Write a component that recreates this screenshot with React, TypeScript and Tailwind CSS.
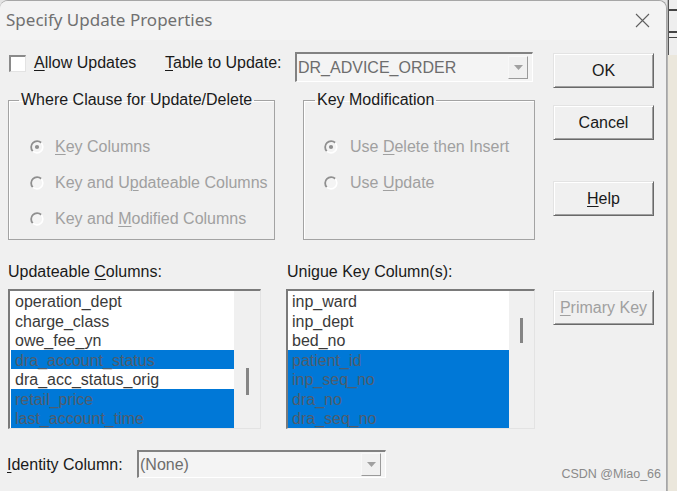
import React from 'react';

const Mn: React.FC<{ children: React.ReactNode }> = ({ children }) => (
  <span className="underline decoration-1 underline-offset-[2px]">{children}</span>
);

const Radio: React.FC<{ checked?: boolean }> = ({ checked }) => (
  <svg width="14" height="14" viewBox="0 0 14 14" className="shrink-0">
    <circle cx="7" cy="7" r="6" fill="#f4f4f4" />
    <path d="M2.76 11.24 A6 6 0 0 1 11.24 2.76" stroke="#8f8f8f" strokeWidth="1.8" fill="none" />
    <path d="M11.24 2.76 A6 6 0 0 1 2.76 11.24" stroke="#ffffff" strokeWidth="1.6" fill="none" />
    {checked && <circle cx="7" cy="7" r="2.1" fill="#8f8f8f" />}
  </svg>
);

const Arrow: React.FC = () => (
  <svg width="9" height="5" viewBox="0 0 9 5">
    <path d="M0 0 H9 L4.5 5 Z" fill="#a0a0a0" />
  </svg>
);

const Combo: React.FC<{ value: string; width: string; height: string }> = ({ value, width, height }) => (
  <div
    className={`flex items-center ${width} ${height} bg-[#f4f4f4] border-t-2 border-l-2 border-t-[#828282] border-l-[#828282] border-r border-b border-r-white border-b-white`}
  >
    <div className="flex-1 pl-[1px] text-[#6d6d6d] leading-[18px]">{value}</div>
    <div className="w-[20px] h-[23px] mr-[4px] flex items-center justify-center bg-[#f0f0f0] border border-t-[#f8f8f8] border-l-[#f8f8f8] border-r-[#9a9a9a] border-b-[#9a9a9a]">
      <Arrow />
    </div>
  </div>
);

const Button: React.FC<{ children: React.ReactNode; disabled?: boolean; className?: string }> = ({
  children,
  disabled,
  className,
}) => (
  <div
    className={`h-[35px] w-[101px] flex items-center justify-center bg-[#f0f0f0] border border-t-[#e3e3e3] border-l-[#e3e3e3] border-r-[#696969] border-b-[#696969] shadow-[inset_1px_1px_0_#ffffff,inset_-1px_-1px_0_#a0a0a0] ${
      disabled ? 'text-[#a0a0a0]' : 'text-[#1a1a1a]'
    } ${className ?? ''}`}
  >
    {children}
  </div>
);

type Item = { name: string; selected?: boolean };

const ListBox: React.FC<{
  items: Item[];
  width: string;
  hlPad: string;
  barWidth: string;
  thumbTop: string;
  thumbHeight: string;
}> = ({ items, width, hlPad, barWidth, thumbTop, thumbHeight }) => (
  <div
    className={`flex ${width} h-[140px] bg-white border-t-2 border-l-2 border-t-[#7a7a7a] border-l-[#7a7a7a] border-r border-b border-r-[#e3e3e3] border-b-[#e3e3e3] overflow-hidden`}
  >
    <div className={`flex-1 ${hlPad}`}>
      {items.map((item) => (
        <div
          key={item.name}
          className={`h-[19.55px] leading-[19.55px] pt-[1px] pl-[4px] whitespace-nowrap ${
            item.selected ? 'bg-[#0078d7] text-[#4f5d6d]' : 'text-[#3a3a3a]'
          }`}
        >
          {item.name}
        </div>
      ))}
    </div>
    <div className={`${barWidth} bg-[#f0f0f0] flex justify-center`}>
      <div className={`w-[3px] ${thumbTop} ${thumbHeight} bg-[#858585]`} />
    </div>
  </div>
);

const updateable: Item[] = [
  { name: 'operation_dept' },
  { name: 'charge_class' },
  { name: 'owe_fee_yn' },
  { name: 'dra_account_status', selected: true },
  { name: 'dra_acc_status_orig' },
  { name: 'retail_price', selected: true },
  { name: 'last_account_time', selected: true },
];

const uniqueKeys: Item[] = [
  { name: 'inp_ward' },
  { name: 'inp_dept' },
  { name: 'bed_no' },
  { name: 'patient_id', selected: true },
  { name: 'inp_seq_no', selected: true },
  { name: 'dra_no', selected: true },
  { name: 'dra_seq_no', selected: true },
];

const App: React.FC = () => {
  return (
    <div className="w-[677px] h-[491px] flex bg-[#e4e4e4] overflow-hidden font-['Liberation_Sans',Arial,sans-serif] text-[16px] text-[#1a1a1a]">
      {/* dialog */}
      <div className="relative w-[667px] h-full flex flex-col bg-[#f0f0f0] rounded-t-[8px] border-t border-r border-[#a6a6a6]">
        {/* title bar */}
        <div className="h-[39px] flex items-center justify-between bg-[#f3f3f3] rounded-t-[8px] pl-[6px] pr-[16px]">
          <span className="font-['Noto_Sans',sans-serif] text-[17px] text-[#707070] pb-[1px]">
            Specify Update Properties
          </span>
          <svg width="15" height="15" viewBox="0 0 15 15" className="mb-[1px]">
            <path d="M1 1 L14 14 M14 1 L1 14" stroke="#5f5f5f" strokeWidth="1.1" />
          </svg>
        </div>

        <div className="flex pl-[8px]">
          {/* left column */}
          <div className="w-[527px] flex flex-col">
            {/* row 1 */}
            <div className="mt-[12px] h-[30px] flex items-start">
              <div className="w-[157px] flex items-start">
                <div className="ml-[1px] mt-[3px] w-[17px] h-[17px] bg-white border-t-2 border-l-2 border-t-[#8a8a8a] border-l-[#8a8a8a] border-r border-b border-r-[#e3e3e3] border-b-[#e3e3e3]" />
                <span className="ml-[8px] mt-[2px] leading-[18px]">
                  <Mn>A</Mn>llow Updates
                </span>
              </div>
              <span className="w-[130px] mt-[2px] leading-[18px]">
                <Mn>T</Mn>able to Update:
              </span>
              <Combo value="DR_ADVICE_ORDER" width="w-[238px]" height="h-[30px]" />
            </div>

            {/* row 2: group boxes */}
            <div className="mt-[10px] flex">
              <fieldset className="w-[267px] h-[148px] border border-[#a3a3a3] shadow-[inset_1px_1px_0_#ffffff]">
                <legend className="ml-[10px] px-[2px] leading-[16px]">Where Clause for Update/Delete</legend>
                <div className="pl-[21px] pt-[21px] flex flex-col text-[#a0a0a0]">
                  <div className="h-[36px] flex items-center gap-[11px]">
                    <Radio checked />
                    <span>
                      <Mn>K</Mn>ey Columns
                    </span>
                  </div>
                  <div className="h-[36px] flex items-center gap-[11px]">
                    <Radio />
                    <span>
                      Key and U<Mn>p</Mn>dateable Columns
                    </span>
                  </div>
                  <div className="h-[36px] flex items-center gap-[11px]">
                    <Radio />
                    <span>
                      Key and <Mn>M</Mn>odified Columns
                    </span>
                  </div>
                </div>
              </fieldset>
              <fieldset className="ml-[28px] w-[232px] h-[148px] border border-[#a3a3a3] shadow-[inset_1px_1px_0_#ffffff]">
                <legend className="ml-[11px] px-[2px] leading-[16px]">Key Modification</legend>
                <div className="pl-[20px] pt-[21px] flex flex-col text-[#a0a0a0]">
                  <div className="h-[36px] flex items-center gap-[12px]">
                    <Radio checked />
                    <span>
                      Use <Mn>D</Mn>elete then Insert
                    </span>
                  </div>
                  <div className="h-[36px] flex items-center gap-[12px]">
                    <Radio />
                    <span>
                      Use <Mn>U</Mn>pdate
                    </span>
                  </div>
                </div>
              </fieldset>
            </div>

            {/* row 3: labels */}
            <div className="mt-[23px] flex leading-[18px]">
              <span className="w-[279px]">
                Updateable <Mn>C</Mn>olumns:
              </span>
              <span>Unigue Key Column(s):</span>
            </div>

            {/* row 4: list boxes */}
            <div className="mt-[8px] flex gap-[25px]">
              <ListBox
                items={updateable}
                width="w-[253px]"
                hlPad="pl-[1px]"
                barWidth="w-[26px]"
                thumbTop="mt-[77px]"
                thumbHeight="h-[27px]"
              />
              <ListBox
                items={uniqueKeys}
                width="w-[249px]"
                hlPad="pl-0"
                barWidth="w-[25px]"
                thumbTop="mt-[27px]"
                thumbHeight="h-[25px]"
              />
            </div>

            {/* row 5: identity */}
            <div className="mt-[21px] flex items-start">
              <span className="-ml-[1px] w-[130px] mt-[6px] leading-[18px]">
                <Mn>I</Mn>dentity Column:
              </span>
              <Combo value="(None)" width="w-[249px]" height="h-[28px]" />
            </div>
          </div>

          {/* button column */}
          <div className="ml-[18px] flex flex-col">
            <Button className="mt-[13px]">OK</Button>
            <Button className="mt-[17px]">Cancel</Button>
            <Button className="mt-[41px]">
              <span>
                <Mn>H</Mn>elp
              </span>
            </Button>
            <Button className="mt-[74px]" disabled>
              <span>
                <Mn>P</Mn>rimary Key
              </span>
            </Button>
          </div>
        </div>

        <span className="absolute right-[5px] bottom-[7px] text-[12.5px] text-[#8a8a8a]">CSDN @Miao_66</span>
      </div>

      {/* window behind */}
      <div className="w-[10px] h-full flex flex-col border-l border-[#b5b5b5]">
        <div className="h-[55px] bg-[#eeeeee] flex flex-col border-l border-[#555]">
          <div className="mt-[9px] h-[2px] bg-[#444]" />
          <div className="mt-[20px] h-[2px] bg-[#444]" />
          <div className="mt-[4px] h-[1px] bg-[#444]" />
        </div>
        <div className="flex-1 bg-[#ebe7dc]" />
      </div>
    </div>
  );
};

export default App;
